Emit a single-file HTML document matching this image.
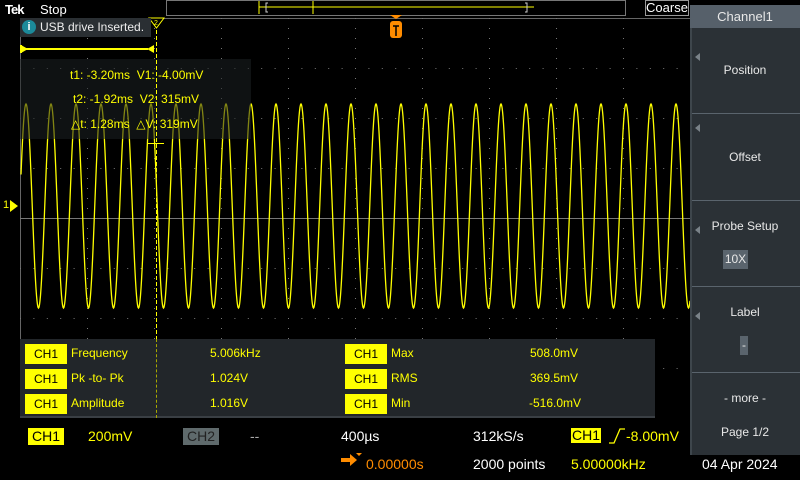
<!DOCTYPE html>
<html><head><meta charset="utf-8"><style>
*{margin:0;padding:0;box-sizing:border-box}
body{width:800px;height:480px;background:#000;overflow:hidden;position:relative;font-family:"Liberation Sans","DejaVu Sans",sans-serif;color:#fff}
.a{position:absolute;white-space:nowrap}
.y{color:#ffff00}
.tag{background:#ffff00;color:#000;text-align:center}
.pn{position:absolute;left:690px;width:110px;background:#2b3136;border-top:1px solid #5a646d}
.pn div{position:absolute;width:100%;text-align:center;font-size:12px;color:#e8e8e8}
.tri{position:absolute;left:5px;width:0;height:0;border-top:4px solid transparent;border-bottom:4px solid transparent;border-right:5px solid #7a8288}
</style></head><body>
<svg class="a" style="left:0;top:0" width="800" height="480" id="sv">
<rect x="166.5" y="0.5" width="459" height="15" fill="none" stroke="#777"/>
<line x1="259" y1="7" x2="534" y2="7" stroke="#ffff00"/>
<line x1="259" y1="1" x2="259" y2="14" stroke="#ffff00"/>
<path d="M268 3h-2v9h2" stroke="#ccc" fill="none"/>
<path d="M525 3h2v9h-2" stroke="#ccc" fill="none"/>
<line x1="313" y1="1" x2="313" y2="14" stroke="#ffff00"/>
<line x1="20.5" y1="18" x2="20.5" y2="418" stroke="#666"/>
<line x1="20" y1="18.5" x2="690" y2="18.5" stroke="#666"/>
<line x1="20" y1="218.5" x2="690" y2="218.5" stroke="#777"/>
<g id="grid"></g>
<path id="wave" fill="none" stroke="#ffff00" stroke-width="1.3"/>
<rect x="20" y="59" width="231" height="80" fill="#1c2022" fill-opacity="0.55"/>
<line x1="156.5" y1="18" x2="156.5" y2="418" stroke="#ffff00" stroke-dasharray="4,2"/>
<line x1="148" y1="143.5" x2="164" y2="143.5" stroke="#ffff00"/>
<path d="M149 18h15l-7.5 10z" fill="#000" stroke="#ffff00"/>
<text x="154" y="25" font-size="7" fill="#ffff00" font-family="Liberation Sans">2</text>
<path d="M22 49h126" stroke="#ffff00" stroke-width="2"/>
<path d="M21 45v8l7-4z M154 45v8l-7-4z" fill="#ffff00"/>
<line x1="21" y1="45" x2="21" y2="53" stroke="#ffff00" stroke-width="2"/>
<path d="M10 200l8 6-8 6z" fill="#ffff00"/>
<path d="M390 15h12l-6 4z" fill="#ff8c00"/>
<rect x="390" y="21" width="12" height="17" rx="3" fill="#ff8c00"/>
<path d="M393 26h6M396 26v10" stroke="#000" stroke-width="1.5"/>
</svg>
<div class="a" style="left:5px;top:2px;font-size:13px;font-weight:bold;letter-spacing:-1px">Tek</div>
<div class="a" style="left:40px;top:2px;font-size:13px">Stop</div>
<div class="a" style="left:645px;top:0;width:44px;height:16px;border:1px solid #999;font-size:13px;text-align:center;line-height:14px">Coarse</div>
<div class="a" style="left:20px;top:18px;width:131px;height:19px;background:#2a2f33"></div>
<div class="a" style="left:22px;top:20px;width:14px;height:14px;border-radius:7px;background:#1c8a9a;font-size:11px;font-weight:bold;text-align:center;line-height:14px">i</div>
<div class="a" style="left:40px;top:20px;font-size:12px;color:#eee">USB drive Inserted.</div>
<div class="a y" style="left:70px;top:68px;font-size:12px">t1: -3.20ms&nbsp; V1: -4.00mV</div>
<div class="a y" style="left:73px;top:92px;font-size:12px">t2: -1.92ms&nbsp; V2: 315mV</div>
<div class="a y" style="left:71px;top:117px;font-size:12px">△t: 1.28ms&nbsp; △V: 319mV</div>
<div class="a y" style="left:3px;top:199px;font-size:11px">1</div>
<div class="a" style="left:20px;top:339px;width:635px;height:79px;background:#22262a;border-bottom:2px solid #3a3f44"></div>
<div class="a tag" style="left:25px;top:344px;width:42px;height:20px;font-size:12px;line-height:20px">CH1</div>
<div class="a tag" style="left:25px;top:369px;width:42px;height:20px;font-size:12px;line-height:20px">CH1</div>
<div class="a tag" style="left:25px;top:394px;width:42px;height:20px;font-size:12px;line-height:20px">CH1</div>
<div class="a tag" style="left:345px;top:344px;width:42px;height:20px;font-size:12px;line-height:20px">CH1</div>
<div class="a tag" style="left:345px;top:369px;width:42px;height:20px;font-size:12px;line-height:20px">CH1</div>
<div class="a tag" style="left:345px;top:394px;width:42px;height:20px;font-size:12px;line-height:20px">CH1</div>
<div class="a" style="left:156px;top:339px;width:1px;height:79px;border-left:1px dashed #a8a800"></div>
<div class="a y" style="left:71px;top:346px;font-size:12px">Frequency</div>
<div class="a y" style="left:71px;top:371px;font-size:12px">Pk -to- Pk</div>
<div class="a y" style="left:71px;top:396px;font-size:12px">Amplitude</div>
<div class="a y" style="left:210px;top:346px;font-size:12px">5.006kHz</div>
<div class="a y" style="left:210px;top:371px;font-size:12px">1.024V</div>
<div class="a y" style="left:210px;top:396px;font-size:12px">1.016V</div>
<div class="a y" style="left:391px;top:346px;font-size:12px">Max</div>
<div class="a y" style="left:391px;top:371px;font-size:12px">RMS</div>
<div class="a y" style="left:391px;top:396px;font-size:12px">Min</div>
<div class="a y" style="left:530px;top:346px;font-size:12px">508.0mV</div>
<div class="a y" style="left:530px;top:371px;font-size:12px">369.5mV</div>
<div class="a y" style="left:529px;top:396px;font-size:12px">-516.0mV</div>
<div class="a tag" style="left:28px;top:428px;width:36px;height:17px;font-size:14px;line-height:17px">CH1</div>
<div class="a y" style="left:88px;top:428px;font-size:14px">200mV</div>
<div class="a" style="left:183px;top:428px;width:36px;height:17px;font-size:14px;line-height:17px;background:#5f6a6c;color:#222;text-align:center">CH2</div>
<div class="a" style="left:250px;top:428px;font-size:14px;color:#aaa">--</div>
<div class="a" style="left:341px;top:428px;font-size:14px">400µs</div>
<div class="a" style="left:473px;top:428px;font-size:14px">312kS/s</div>
<div class="a tag" style="left:571px;top:428px;width:30px;height:15px;font-size:14px;line-height:15px">CH1</div>
<svg class="a" style="left:607px;top:427px" width="20" height="18"><path d="M2 16h5l6-14h5" stroke="#ffff00" fill="none" stroke-width="1.3"/></svg>
<div class="a y" style="left:626px;top:428px;font-size:14px">-8.00mV</div>
<svg class="a" style="left:340px;top:452px" width="22" height="16"><path d="M1 8h10" stroke="#ff8c00" stroke-width="4"/><path d="M10 2l7 6-7 6z" fill="#ff8c00"/><path d="M16 1h6l-3 3z" fill="#ff8c00"/></svg>
<div class="a" style="left:366px;top:456px;font-size:14px;color:#ff8c00">0.00000s</div>
<div class="a" style="left:473px;top:456px;font-size:14px">2000 points</div>
<div class="a y" style="left:571px;top:456px;font-size:14px">5.00000kHz</div>
<div class="a" style="left:702px;top:456px;font-size:14px">04 Apr 2024</div>
<div class="pn" style="top:5px;height:23px;background:#56606a;border:none"><div style="top:4px;font-size:13px">Channel1</div></div>
<div class="pn" style="top:28px;height:85px;border:none"><div style="top:35px">Position</div><span class="tri" style="top:25px"></span></div>
<div class="pn" style="top:113px;height:87px"><div style="top:36px">Offset</div><span class="tri" style="top:10px"></span></div>
<div class="pn" style="top:200px;height:86px"><div style="top:18px">Probe Setup</div><span class="tri" style="top:25px"></span><div style="top:49px;left:33px;width:25px;height:19px;background:#5a646d;line-height:19px">10X</div></div>
<div class="pn" style="top:286px;height:86px"><div style="top:18px">Label</div><span class="tri" style="top:25px"></span><div style="top:49px;left:50px;width:8px;height:19px;background:#5a646d;line-height:19px">-</div></div>
<div class="pn" style="top:372px;height:83px"><div style="top:18px">- more -</div><div style="top:52px">Page 1/2</div></div>
<div class="a" style="left:690px;top:28px;width:2px;height:427px;background:#3e464c"></div>
<script>
var g=document.getElementById('grid'),s='';
var xs=[],ys=[];
for(var i=0;i<=10;i++)xs.push(20+i*67);
for(var j=0;j<=8;j++)ys.push(18+j*50);
for(i=1;i<10;i++){for(var y=18;y<418;y+=10)s+='<rect x="'+(xs[i])+'" y="'+y+'" width="1" height="1" fill="#777"/>';}
for(j=1;j<8;j++){for(var x=20;x<690;x+=13.4)s+='<rect x="'+x.toFixed(1)+'" y="'+ys[j]+'" width="1" height="1" fill="#777"/>';}
g.innerHTML=s;
var d='';
for(x=21;x<=690;x+=0.5){var v=206-102*Math.cos(2*Math.PI*(x-26)/25);d+=(x==21?'M':'L')+x+' '+v.toFixed(1);}
document.getElementById('wave').setAttribute('d',d);
</script>
</body></html>
